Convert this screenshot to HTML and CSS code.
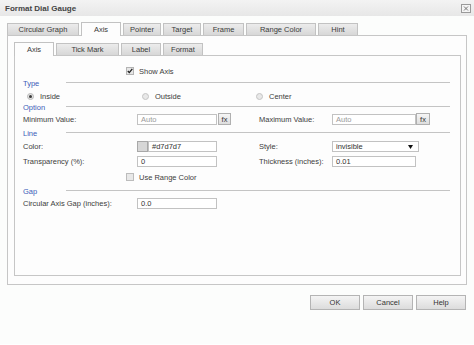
FILE: index.html
```html
<!DOCTYPE html>
<html>
<head>
<meta charset="utf-8">
<title>Format Dial Gauge</title>
<link rel="stylesheet" href="styles.css">
</head>
<body>
<div class="dialog">
  <div class="titlebar">
    <span class="title">Format Dial Gauge</span>
    <svg class="close" width="10" height="9" viewBox="0 0 10 9"><rect x="0.5" y="0.5" width="9" height="8" fill="#f4f4f4" stroke="#9a9a9a"/><path d="M3 2.5 L7 6.5 M7 2.5 L3 6.5" stroke="#777" stroke-width="1"/></svg>
  </div>
  <div class="main">
    <div class="tabs outer">
      <div class="tab w72">Circular Graph</div>
      <div class="tab active w40">Axis</div>
      <div class="tab w38">Pointer</div>
      <div class="tab w38">Target</div>
      <div class="tab w41">Frame</div>
      <div class="tab w70">Range Color</div>
      <div class="tab w40">Hint</div>
    </div>
    <div class="panel">
      <div class="tabs inner">
        <div class="tab active w40">Axis</div>
        <div class="tab w63">Tick Mark</div>
        <div class="tab w40">Label</div>
        <div class="tab w40">Format</div>
      </div>
      <div class="subpanel">
        <div class="row r-show check-row">
          <svg class="box" width="8" height="8" viewBox="0 0 8 8"><rect x="0.5" y="0.5" width="7" height="7" fill="#e6e6e6" stroke="#b4b4b4"/><path d="M1.8 4 L3.3 5.6 L6.3 1.8" stroke="#1e1e1e" stroke-width="1.3" fill="none"/></svg>
          <span>Show Axis</span>
        </div>
        <div class="hdr r-type"><span class="hdr-label">Type</span><span class="hdr-line"></span></div>
        <div class="row r-radio">
          <div class="radio-item ri1"><svg width="7" height="7" viewBox="0 0 7 7"><circle cx="3.5" cy="3.5" r="3" fill="#e4e4e4" stroke="#b8b8b8"/><circle cx="3.5" cy="3.5" r="1.5" fill="#3a3a3a"/></svg><span>Inside</span></div>
          <div class="radio-item ri2"><svg width="7" height="7" viewBox="0 0 7 7"><circle cx="3.5" cy="3.5" r="3" fill="#e8e8e8" stroke="#c4c4c4"/></svg><span>Outside</span></div>
          <div class="radio-item ri3"><svg width="7" height="7" viewBox="0 0 7 7"><circle cx="3.5" cy="3.5" r="3" fill="#e8e8e8" stroke="#c4c4c4"/></svg><span>Center</span></div>
        </div>
        <div class="hdr r-option"><span class="hdr-label">Option</span><span class="hdr-line"></span></div>
        <div class="row grid r-minmax">
          <span class="lbl">Minimum Value:</span>
          <div class="ctl"><span class="field f80 ph">Auto</span><span class="fx">fx</span></div>
          <span class="lbl">Maximum Value:</span>
          <div class="ctl"><span class="field f84 ph">Auto</span><span class="fx fx14">fx</span></div>
        </div>
        <div class="hdr r-line"><span class="hdr-label">Line</span><span class="hdr-line"></span></div>
        <div class="row grid r-color">
          <span class="lbl">Color:</span>
          <div class="ctl"><span class="swatch"></span><span class="field f69">#d7d7d7</span></div>
          <span class="lbl">Style:</span>
          <div class="ctl"><span class="select">invisible<svg class="arrow" width="5" height="4" viewBox="0 0 5 4"><path d="M0 0 L5 0 L2.5 4 Z" fill="#111"/></svg></span></div>
        </div>
        <div class="row grid r-trans">
          <span class="lbl">Transparency (%):</span>
          <div class="ctl"><span class="field f80">0</span></div>
          <span class="lbl">Thickness (inches):</span>
          <div class="ctl"><span class="field f84">0.01</span></div>
        </div>
        <div class="row r-range check-row">
          <svg class="box" width="8" height="8" viewBox="0 0 8 8"><rect x="0.5" y="0.5" width="7" height="7" fill="#e8e8e8" stroke="#bcbcbc"/></svg>
          <span>Use Range Color</span>
        </div>
        <div class="hdr r-gap"><span class="hdr-label">Gap</span><span class="hdr-line"></span></div>
        <div class="row grid r-circ">
          <span class="lbl">Circular Axis Gap (inches):</span>
          <div class="ctl"><span class="field f80">0.0</span></div>
        </div>
      </div>
    </div>
  </div>
  <div class="buttons">
    <span class="btn">OK</span>
    <span class="btn">Cancel</span>
    <span class="btn">Help</span>
  </div>
</div>
</body>
</html>
```

FILE: styles.css
```css
* { box-sizing: border-box; }
html, body { margin: 0; padding: 0; }
body {
  width: 474px;
  height: 345px;
  background: #ffffff;
  font-family: "Liberation Sans", Arial, sans-serif;
  font-size: 7.5px;
  color: #3c3c3c;
}
.dialog {
  width: 474px;
  height: 344px;
  background: #fcfdfc;
  display: flex;
  flex-direction: column;
}
.titlebar {
  height: 16px;
  background: linear-gradient(#f3f3f3, #e7e7e7);
  display: flex;
  align-items: center;
  justify-content: space-between;
  padding: 0 3px 0 5px;
}
.title {
  font-weight: bold;
  font-size: 8px;
  color: #444;
}
.close { display: block; }
.main {
  padding: 6px 7px 0 7px;
}
.tabs {
  display: flex;
  align-items: flex-end;
  gap: 2px;
  height: 13px;
}
.tab {
  height: 12px;
  border: 1px solid #c2c2c2;
  border-bottom: none;
  background: linear-gradient(#ececec, #d7d7d7);
  display: flex;
  align-items: center;
  justify-content: center;
  color: #3a3a3a;
  white-space: nowrap;
}
.tab.active {
  height: 14px;
  margin-bottom: -1px;
  background: #fdfdfd;
  position: relative;
  z-index: 1;
}
.w38 { width: 38px; }
.w40 { width: 40px; }
.w41 { width: 41px; }
.w63 { width: 63px; }
.w70 { width: 70px; }
.w72 { width: 72px; }
.panel {
  border: 1px solid #c6c6c6;
  background: #fdfdfd;
  padding: 6px 5px 8px 6px;
}
.subpanel {
  border: 1px solid #c6c6c6;
  background: #fdfdfd;
  height: 221px;
  padding: 9px 0 0 8px;
}
.row {
  display: flex;
  align-items: center;
}
.grid {
  display: grid;
  grid-template-columns: 114px 122px 73px 1fr;
  align-items: center;
}
.ctl { display: flex; align-items: center; }
.check-row { padding-left: 103px; }
.check-row .box { display: block; margin-right: 5px; }
.r-show { height: 12px; }
.hdr {
  display: flex;
  align-items: center;
}
.hdr-label {
  width: 43px;
  color: #3b5cb8;
}
.hdr-line {
  flex: 1;
  height: 1px;
  background: #c4c4c4;
  margin-right: 10px;
  margin-top: -2px;
}
.r-type { height: 13px; }
.r-radio { height: 12px; }
.radio-item { display: flex; align-items: center; }
.radio-item svg { display: block; margin-right: 6px; }
.ri1 { margin-left: 4px; width: 115px; }
.ri2 { width: 114px; }
.r-option { height: 10px; }
.r-minmax { height: 14px; }
.r-line { height: 14px; }
.r-color { height: 13px; }
.r-trans { height: 16px; }
.r-range { height: 16px; }
.r-gap { height: 12px; }
.r-circ { height: 12px; }
.field {
  display: flex;
  align-items: center;
  height: 11px;
  border: 1px solid #c2c2c2;
  background: #ffffff;
  padding-left: 3px;
  color: #333;
}
.field.ph { color: #9a9a9a; }
.f80 { width: 80px; }
.f84 { width: 84px; }
.f69 { width: 69px; }
.fx {
  display: flex;
  align-items: center;
  justify-content: center;
  width: 13px;
  height: 12px;
  margin-left: 1px;
  border: 1px solid #b0b0b0;
  background: linear-gradient(#f6f6f6, #dedede);
  color: #333;
}
.fx14 { width: 14px; margin-left: 0; }
.swatch {
  width: 11px;
  height: 11px;
  border: 1px solid #a8a8a8;
  background: #d7d7d7;
}
.select {
  display: flex;
  align-items: center;
  justify-content: space-between;
  width: 87px;
  height: 11px;
  border: 1px solid #c2c2c2;
  background: #fff;
  padding: 0 5px 0 3px;
  color: #333;
}
.arrow { display: block; }
.buttons {
  display: flex;
  justify-content: flex-end;
  gap: 3px;
  padding-right: 8px;
  margin-top: 10px;
}
.btn {
  width: 50px;
  height: 15px;
  display: flex;
  align-items: center;
  justify-content: center;
  border: 1px solid #b4b4b4;
  background: linear-gradient(#f4f4f4, #dcdcdc);
  color: #333;
}
```
